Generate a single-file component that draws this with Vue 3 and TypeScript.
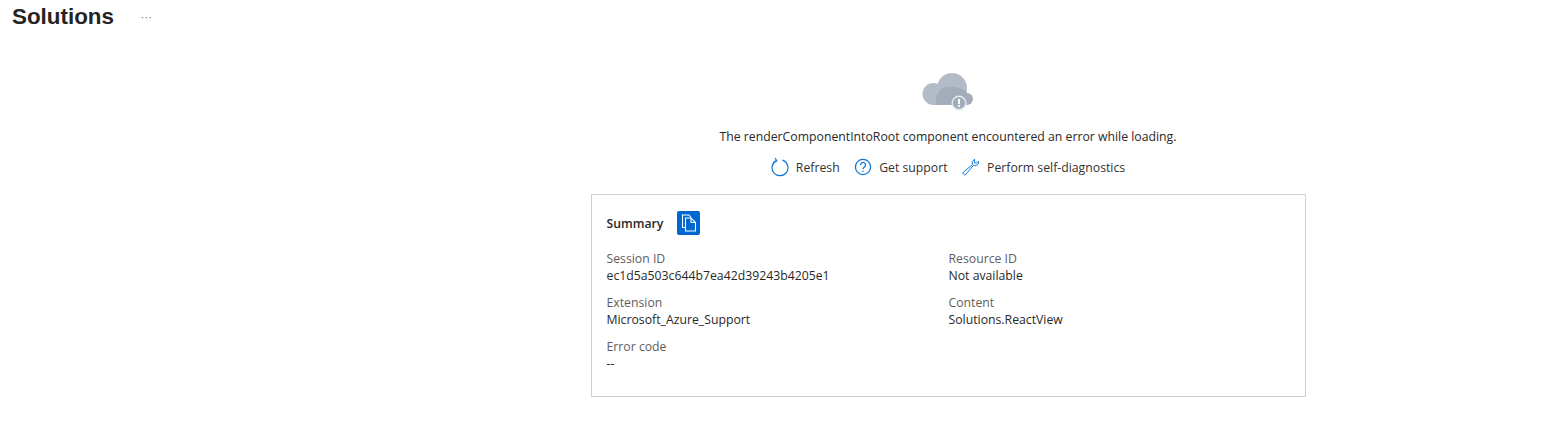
<script setup lang="ts">
interface Field { label: string; value: string }
const fields: Field[] = [
  { label: 'Session ID', value: 'ec1d5a503c644b7ea42d39243b4205e1' },
  { label: 'Resource ID', value: 'Not available' },
  { label: 'Extension', value: 'Microsoft_Azure_Support' },
  { label: 'Content', value: 'Solutions.ReactView' },
  { label: 'Error code', value: '--' },
]
</script>

<template>
  <div class="page">
    <header class="head">
      <h1 class="title">Solutions</h1>
      <span class="more">···</span>
    </header>
    <main class="main">
      <svg class="cloud" width="56" height="42" viewBox="20 10 56 42">
        <circle cx="33.5" cy="34" r="11" fill="#b3bcc6" />
        <circle cx="52" cy="28" r="15" fill="#b3bcc6" />
        <rect x="33" y="30" width="30" height="15" fill="#b3bcc6" />
        <circle cx="67" cy="39" r="6" fill="#a3adb9" />
        <path d="M36 45 C35 35 40 27 48 27 C55 26 62 28 66.6 31.5 L66 45 Z" fill="#a3adb9" />
        <circle cx="59" cy="43" r="6.8" fill="#a3adb9" stroke="#e6e9ec" stroke-width="1.4" />
        <rect x="58.1" y="39" width="1.9" height="5" fill="#fff" />
        <rect x="58.1" y="45" width="1.9" height="1.9" fill="#fff" />
      </svg>
      <p class="message">The renderComponentIntoRoot component encountered an error while loading.</p>
      <nav class="actions">
        <a class="action">
          <svg width="18" height="20" viewBox="0 0 18 20" fill="none" stroke="#0f78d4" stroke-width="1.2">
            <path d="M5.3 3.6 A8 8 0 1 0 11.5 3.1" />
            <path d="M4 1 L5.8 3.8 L3 5.4" />
          </svg>
          <span>Refresh</span>
        </a>
        <a class="action">
          <svg width="18" height="18" viewBox="0 0 18 18" fill="none" stroke="#0f78d4" stroke-width="1.3">
            <circle cx="9" cy="9" r="7.6" />
            <path d="M6.5 7 a2.5 2.5 0 1 1 3.8 2.1 c-.9.6-1.3 1-1.3 2" />
            <path d="M9 12.4 v1.3" />
          </svg>
          <span>Get support</span>
        </a>
        <a class="action">
          <svg width="18" height="18" viewBox="0 0 18 18" fill="none" stroke="#0f78d4" stroke-width="1">
            <path d="M12.6 1.2 L10.4 3.4 a3.6 3.6 0 0 0 .3 3 L1.6 14 a1.5 1.5 0 0 0 2.2 2.3 L11.4 7.4 a3.6 3.6 0 0 0 5 -4.2 L14.4 5.2 L12.6 4.9 Z" />
          </svg>
          <span>Perform self-diagnostics</span>
        </a>
      </nav>
      <section class="card">
        <div class="card-head">
          <h2 class="summary">Summary</h2>
          <button class="copy" type="button" aria-label="Copy">
            <svg width="16" height="18" viewBox="0 0 16 18" fill="none" stroke="#fff" stroke-width="1.1">
              <path d="M4.5 13.5 H1.5 V1 H8 L10 3.5" />
              <path d="M4.5 4 H10 L14.5 8.5 V17 H4.5 Z" fill="#0067d1" />
              <path d="M10 4 V8.5 H14.5" />
            </svg>
          </button>
        </div>
        <dl class="grid">
          <div v-for="f in fields" :key="f.label" class="field">
            <dt>{{ f.label }}</dt>
            <dd>{{ f.value }}</dd>
          </div>
        </dl>
      </section>
    </main>
  </div>
</template>

<style>
html, body { margin: 0; background: #fff; }
</style>

<style scoped>
.page { font-family: "Open Sans", "Noto Sans", sans-serif; color: #292827; height: 445px; overflow: hidden; }
.head { display: flex; align-items: center; padding: 5px 0 0 12px; height: 29px; box-sizing: border-box; }
.title { margin: 0; font: 700 22.4px/24px "Liberation Sans", sans-serif; color: #252423; width: 129px; }
.more { font-size: 11px; color: #777; line-height: 1; letter-spacing: 1px; margin-top: -2px; }
.main { display: flex; flex-direction: column; align-items: center; margin-left: 332px; padding-top: 41px; }
.cloud { display: block; }
.message { margin: 16px 0 0; font-size: 12.25px; line-height: 18px; }
.actions { display: flex; margin-top: 11px; gap: 14.5px; height: 20px; align-items: center; }
.action { display: flex; align-items: center; gap: 7px; font-size: 12.25px; color: #323130; }
.card { box-sizing: border-box; width: 715px; height: 203px; margin-top: 17px; border: 1px solid #cfcfcf; padding: 16px 15px; }
.card-head { display: flex; align-items: center; gap: 14px; height: 24px; }
.summary { margin: 0; font-size: 12.25px; font-weight: 600; color: #292827; }
.copy { width: 23px; height: 24px; padding: 0; border: 0; border-radius: 2px; background: #0067d1; display: flex; align-items: center; justify-content: center; }
.grid { display: grid; grid-template-columns: 342px 1fr; row-gap: 10px; margin: 15px 0 0; }
.field dt { font-size: 12.25px; line-height: 17px; color: #5f5e5d; }
.field dd { margin: 0; font-size: 12.25px; line-height: 17px; color: #292827; }
</style>
